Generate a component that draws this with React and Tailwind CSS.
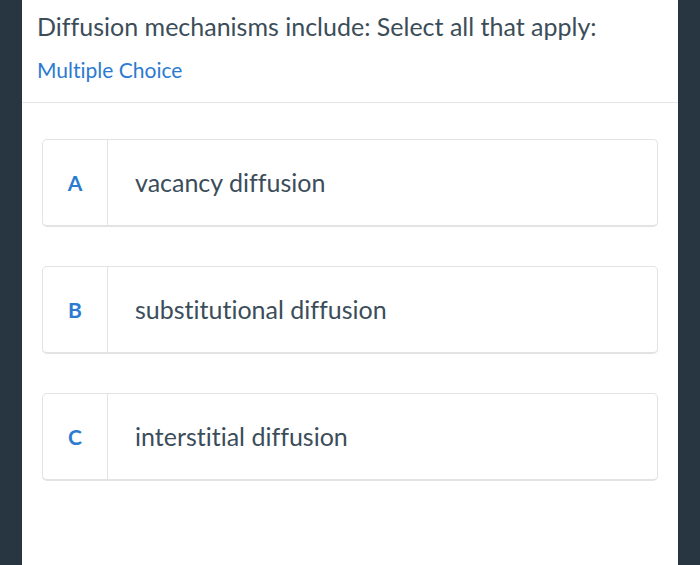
import React from 'react';

const options = [
  { letter: 'A', text: 'vacancy diffusion' },
  { letter: 'B', text: 'substitutional diffusion' },
  { letter: 'C', text: 'interstitial diffusion' },
];

const App = () => {
  return (
    <div
      className="w-[700px] h-[565px] bg-[#283642] flex overflow-hidden [font-variant-ligatures:none]"
      style={{ fontFamily: 'Lato, "Noto Sans", sans-serif' }}
    >
      <div className="ml-[22px] w-[656px] h-full bg-white flex flex-col">
        {/* header */}
        <div className="h-[103px] border-b border-[#e3e5e8] pl-[15px] pt-[9px]">
          <h1 className="text-[25px] leading-[34px] text-[#3c4d5a]">
            Diffusion mechanisms include: Select all that apply:
          </h1>
          <p className="mt-[14px] text-[21px] leading-[26px] text-[#2b7bd0]">Multiple Choice</p>
        </div>

        {/* options */}
        <div className="flex flex-col gap-[39px] px-[20px] pt-[36px]">
          {options.map((opt) => (
            <div
              key={opt.letter}
              className="h-[88px] flex rounded-[5px] border border-[#e2e3e5] border-b-2 bg-white"
            >
              <div className="w-[65px] shrink-0 border-r border-[#e2e3e5] flex items-center justify-center text-[21px] font-bold text-[#2b7bd0]">
                {opt.letter}
              </div>
              <div className="flex items-center pl-[27px] text-[25px] text-[#3c4d5a]">
                {opt.text}
              </div>
            </div>
          ))}
        </div>
      </div>
    </div>
  );
};

export default App;
